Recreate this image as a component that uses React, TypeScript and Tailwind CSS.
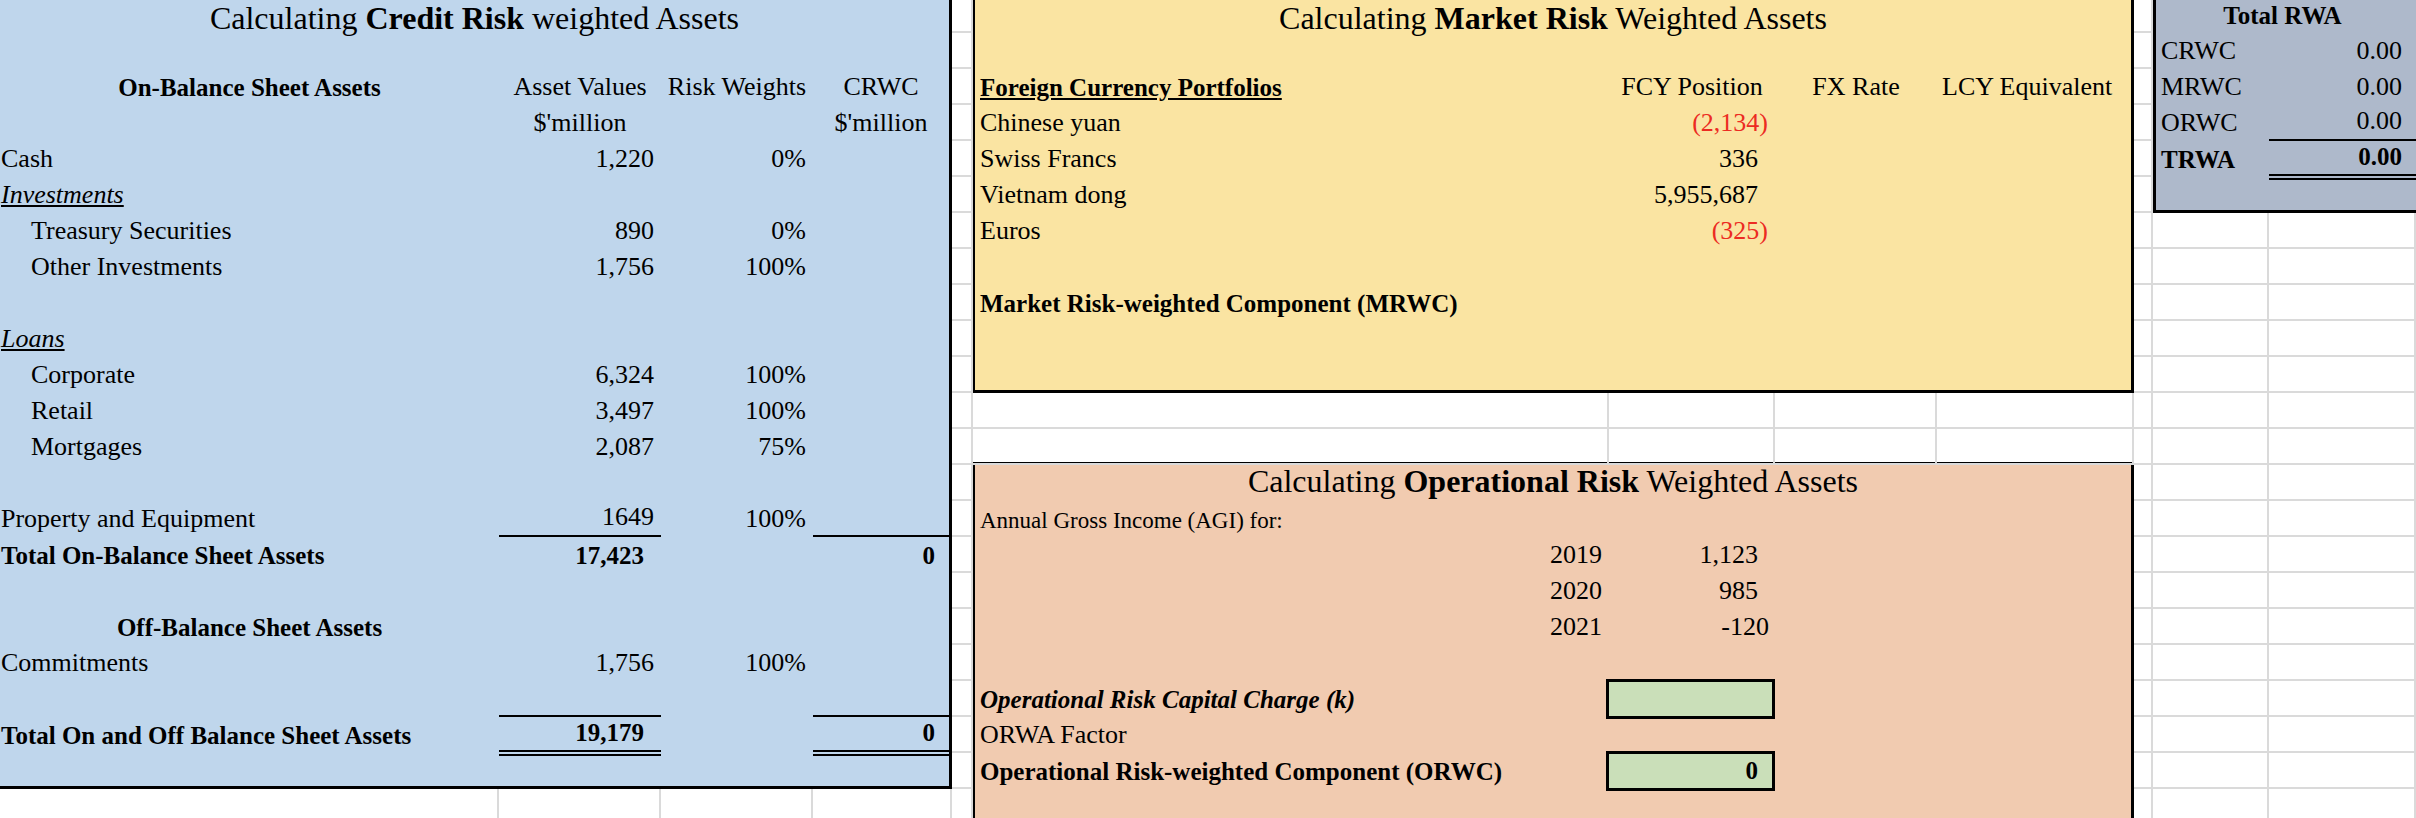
import type { ReactNode } from "react";

const GRIDLINE = "border-r-2 border-b-2 border-[#dadada]";

function Cell({
  children,
  className = "",
  pad = "pb-[5px]",
}: {
  children?: ReactNode;
  className?: string;
  pad?: string;
}) {
  return (
    <div className={`flex items-end whitespace-nowrap leading-none ${pad} ${className}`}>
      <span>{children}</span>
    </div>
  );
}

const NUM = "justify-end pr-[7px]";
const NUM_PAD = "justify-end pr-[17px]";
const B = "font-bold text-[25px]";
const TITLE = "col-span-4 justify-center text-[32px]";
const DOUBLE = "border-b-[6px] border-double border-black -mb-[3px]";

function CreditRisk() {
  return (
    <div className="col-start-1 col-end-5 row-start-1 row-end-23 grid grid-cols-subgrid grid-rows-subgrid bg-[#bfd6ec] border-r-[3px] border-b-[3px] border-black">
      {/* top-row title sits a touch low so its glyph box stays on the page */}
      <Cell className={`${TITLE} -mb-[1px]`} pad="pb-0">
        Calculating <b>Credit Risk</b> weighted Assets
      </Cell>
      <div className="col-span-4" />

      <Cell className={`justify-center ${B}`}>On-Balance Sheet Assets</Cell>
      <Cell className="justify-center">Asset Values</Cell>
      <Cell className="justify-center">Risk Weights</Cell>
      <Cell className="justify-center">CRWC</Cell>

      <div />
      <Cell className="justify-center">$'million</Cell>
      <div />
      <Cell className="justify-center">$'million</Cell>

      <Cell className="pl-[1px]">Cash</Cell>
      <Cell className={NUM}>1,220</Cell>
      <Cell className={NUM}>0%</Cell>
      <div />

      <Cell className="pl-[1px] italic underline">Investments</Cell>
      <div className="col-span-3" />

      <Cell className="pl-[31px]">Treasury Securities</Cell>
      <Cell className={NUM}>890</Cell>
      <Cell className={NUM}>0%</Cell>
      <div />

      <Cell className="pl-[31px]">Other Investments</Cell>
      <Cell className={NUM}>1,756</Cell>
      <Cell className={NUM}>100%</Cell>
      <div />

      <div className="col-span-4" />

      <Cell className="pl-[1px] italic underline">Loans</Cell>
      <div className="col-span-3" />

      <Cell className="pl-[31px]">Corporate</Cell>
      <Cell className={NUM}>6,324</Cell>
      <Cell className={NUM}>100%</Cell>
      <div />

      <Cell className="pl-[31px]">Retail</Cell>
      <Cell className={NUM}>3,497</Cell>
      <Cell className={NUM}>100%</Cell>
      <div />

      <Cell className="pl-[31px]">Mortgages</Cell>
      <Cell className={NUM}>2,087</Cell>
      <Cell className={NUM}>75%</Cell>
      <div />

      <div className="col-span-4" />

      <Cell className="pl-[1px]">Property and Equipment</Cell>
      <Cell className={`${NUM} border-b-2 border-black`}>1649</Cell>
      <Cell className={NUM}>100%</Cell>
      <div className="border-b-2 border-black" />

      <Cell className={`pl-[1px] ${B}`}>Total On-Balance Sheet Assets</Cell>
      <Cell className={`${NUM_PAD} ${B}`}>17,423</Cell>
      <div />
      <Cell className={`justify-end pr-[14px] ${B}`}>0</Cell>

      <div className="col-span-4" />

      <Cell className={`justify-center ${B}`}>Off-Balance Sheet Assets</Cell>
      <div className="col-span-3" />

      <Cell className="pl-[1px]">Commitments</Cell>
      <Cell className={NUM}>1,756</Cell>
      <Cell className={NUM}>100%</Cell>
      <div />

      <div />
      <div className="border-b-2 border-black" />
      <div />
      <div className="border-b-2 border-black" />

      <Cell className={`pl-[1px] ${B}`}>Total On and Off Balance Sheet Assets</Cell>
      <Cell className={`${NUM_PAD} ${B} ${DOUBLE}`}>19,179</Cell>
      <div />
      <Cell className={`justify-end pr-[14px] ${B} ${DOUBLE}`}>0</Cell>

      <div className="col-span-4" />
    </div>
  );
}

function MarketRisk() {
  const rows = [
    { name: "Chinese yuan", value: "(2,134)", red: true },
    { name: "Swiss Francs", value: "336", red: false },
    { name: "Vietnam dong", value: "5,955,687", red: false },
    { name: "Euros", value: "(325)", red: true },
  ];
  return (
    <div className="col-start-6 col-end-10 row-start-1 row-end-12 -ml-[1px] grid grid-cols-subgrid grid-rows-subgrid bg-[#fae4a2] border-x-[3px] border-b-[3px] border-black">
      <Cell className={`${TITLE} -mb-[1px]`} pad="pb-0">
        Calculating <b>Market Risk</b> Weighted Assets
      </Cell>
      <div className="col-span-4" />

      <Cell className={`pl-[5px] underline ${B}`}>Foreign Currency Portfolios</Cell>
      <Cell className="justify-center">FCY Position</Cell>
      <Cell className="justify-center">FX Rate</Cell>
      <Cell className="pl-[5px]">LCY Equivalent</Cell>

      {rows.map((r) => (
        <div key={r.name} className="col-span-4 grid grid-cols-subgrid">
          <Cell className="pl-[5px]">{r.name}</Cell>
          <Cell className={r.red ? `${NUM} text-[#ec2b22]` : NUM_PAD}>{r.value}</Cell>
          <div className="col-span-2" />
        </div>
      ))}

      <div className="col-span-4" />
      <Cell className={`col-span-4 pl-[5px] ${B}`}>Market Risk-weighted Component (MRWC)</Cell>
      <div className="col-span-4" />
      <div className="col-span-4" />
    </div>
  );
}

function TotalRwa() {
  const rows = [
    { label: "CRWC", line: "" },
    { label: "MRWC", line: "" },
    { label: "ORWC", line: "border-b-2 border-black" },
  ];
  return (
    <div className="col-start-11 col-end-13 row-start-1 row-end-7 grid grid-cols-subgrid grid-rows-subgrid bg-[#aeb9cb] border-l-[3px] border-b-[3px] border-black">
      <Cell className={`col-span-2 justify-center pr-[7px] ${B}`}>Total RWA</Cell>
      {rows.map((r) => (
        <div key={r.label} className="col-span-2 grid grid-cols-subgrid">
          <Cell className="pl-[5px]">{r.label}</Cell>
          <Cell className={`justify-end pr-[14px] ${r.line}`}>0.00</Cell>
        </div>
      ))}
      <Cell className={`pl-[5px] ${B}`}>TRWA</Cell>
      <Cell className={`justify-end pr-[14px] ${B} ${DOUBLE}`}>0.00</Cell>
      <div className="col-span-2" />
    </div>
  );
}

function OperationalRisk() {
  const agi = [
    { year: "2019", value: "1,123", pad: NUM_PAD },
    { year: "2020", value: "985", pad: NUM_PAD },
    { year: "2021", value: "-120", pad: "justify-end pr-[6px]" },
  ];
  return (
    <div className="col-start-6 col-end-10 row-start-14 row-end-24 -mt-[3px] -ml-[1px] grid grid-cols-subgrid grid-rows-subgrid bg-[#f1cbb0] border-x-[3px] border-t-[3px] border-black">
      <Cell className={TITLE} pad="pb-[4px]">
        Calculating <b>Operational Risk</b> Weighted Assets
      </Cell>
      <Cell className="col-span-4 pl-[5px] text-[23px]">Annual Gross Income (AGI) for:</Cell>

      {agi.map((r) => (
        <div key={r.year} className="col-span-4 grid grid-cols-subgrid">
          <Cell className={NUM}>{r.year}</Cell>
          <Cell className={r.pad}>{r.value}</Cell>
          <div className="col-span-2" />
        </div>
      ))}

      <div className="col-span-4" />

      <Cell className={`pl-[5px] italic ${B}`}>Operational Risk Capital Charge (k)</Cell>
      <div className="-my-[2px] -ml-[3px] border-[3px] border-black bg-[#cadfb9]" />
      <div className="col-span-2" />

      <Cell className="col-span-4 pl-[5px]">ORWA Factor</Cell>

      <Cell className={`pl-[5px] ${B}`}>Operational Risk-weighted Component (ORWC)</Cell>
      <Cell className={`-my-[2px] -ml-[3px] justify-end pr-[14px] ${B} border-[3px] border-black bg-[#cadfb9]`}>0</Cell>
      <div className="col-span-2" />

      <div className="col-span-4" />
    </div>
  );
}

export default function App() {
  return (
    <div className="w-[2416px] h-[818px] overflow-hidden bg-white text-black text-[26px] font-['Liberation_Serif',serif]">
      <div className="grid grid-cols-[499px_162px_152px_139px_21px_636px_166px_162px_197px_19px_116px_1fr] grid-rows-[33px_repeat(22,36px)]">
        <CreditRisk />
        <MarketRisk />
        <TotalRwa />
        <OperationalRisk />
        {Array.from({ length: 96 }).map((_, i) => (
          <div key={i} className={GRIDLINE} />
        ))}
      </div>
    </div>
  );
}
